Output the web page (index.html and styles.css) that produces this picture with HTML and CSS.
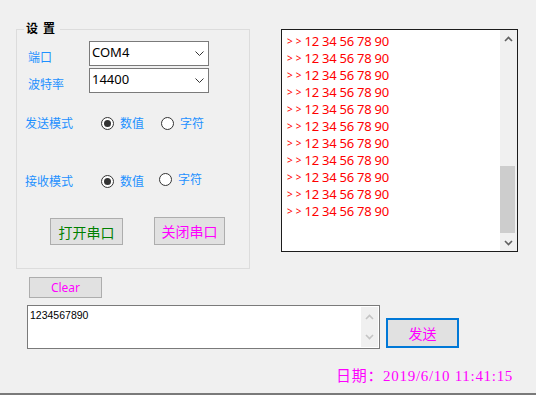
FILE: index.html
```html
<!DOCTYPE html>
<html lang="zh-CN">
<head>
  <meta charset="UTF-8">
  <meta name="viewport" content="width=device-width, initial-scale=1.0">
  <title>串口调试</title>
  <link rel="stylesheet" href="styles.css">
</head>
<body>
  <div class="form">
    <div class="top">
      <div class="group">
        <div class="legend">设置</div>
        <div class="field">
          <span class="lbl">端口</span>
          <div class="combo">COM4<svg class="chev" width="9" height="5" viewBox="0 0 9 5"><path d="M0.5 0.5 L4.5 4.5 L8.5 0.5" fill="none" stroke="#333" stroke-width="1"/></svg></div>
        </div>
        <div class="field second">
          <span class="lbl">波特率</span>
          <div class="combo">14400<svg class="chev" width="9" height="5" viewBox="0 0 9 5"><path d="M0.5 0.5 L4.5 4.5 L8.5 0.5" fill="none" stroke="#333" stroke-width="1"/></svg></div>
        </div>
        <div class="mode send">
          <span class="mlbl">发送模式</span>
          <span class="radio on"></span><span class="rtext first">数值</span>
          <span class="radio"></span><span class="rtext">字符</span>
        </div>
        <div class="mode recv">
          <span class="mlbl">接收模式</span>
          <span class="radio on"></span><span class="rtext first">数值</span>
          <span class="opt-up"><span class="radio"></span><span class="rtext">字符</span></span>
        </div>
        <div class="btns">
          <button class="btn open">打开串口</button>
          <button class="btn close">关闭串口</button>
        </div>
      </div>

      <div class="output">
        <div class="lines">
          <div><span class="pre">&gt;&gt;</span>12 34 56 78 90</div>
          <div><span class="pre">&gt;&gt;</span>12 34 56 78 90</div>
          <div><span class="pre">&gt;&gt;</span>12 34 56 78 90</div>
          <div><span class="pre">&gt;&gt;</span>12 34 56 78 90</div>
          <div><span class="pre">&gt;&gt;</span>12 34 56 78 90</div>
          <div><span class="pre">&gt;&gt;</span>12 34 56 78 90</div>
          <div><span class="pre">&gt;&gt;</span>12 34 56 78 90</div>
          <div><span class="pre">&gt;&gt;</span>12 34 56 78 90</div>
          <div><span class="pre">&gt;&gt;</span>12 34 56 78 90</div>
          <div><span class="pre">&gt;&gt;</span>12 34 56 78 90</div>
          <div><span class="pre">&gt;&gt;</span>12 34 56 78 90</div>
        </div>
        <div class="vscroll">
          <div class="arrow"><svg width="9" height="6" viewBox="0 0 9 6"><path d="M1 5 L4.5 1.5 L8 5" fill="none" stroke="#606060" stroke-width="1.6"/></svg></div>
          <div class="track"><div class="thumb"></div></div>
          <div class="arrow"><svg width="9" height="6" viewBox="0 0 9 6"><path d="M1 1 L4.5 4.5 L8 1" fill="none" stroke="#606060" stroke-width="1.6"/></svg></div>
        </div>
      </div>
    </div>

    <button class="btn clear">Clear</button>

    <div class="send-row">
      <div class="input">
        <div class="input-text">1234567890</div>
        <div class="vscroll small">
          <div class="arrow"><svg width="9" height="6" viewBox="0 0 9 6"><path d="M1 5 L4.5 1.5 L8 5" fill="none" stroke="#c4c4c4" stroke-width="1.6"/></svg></div>
          <div class="track"></div>
          <div class="arrow"><svg width="9" height="6" viewBox="0 0 9 6"><path d="M1 1 L4.5 4.5 L8 1" fill="none" stroke="#c4c4c4" stroke-width="1.6"/></svg></div>
        </div>
      </div>
      <button class="btn send-btn">发送</button>
    </div>

    <div class="date">日期：2019/6/10 11:41:15</div>
  </div>
</body>
</html>
```

FILE: styles.css
```css
* {
  box-sizing: border-box;
}
body {
  margin: 0;
  background: #f0f0f0;
  font-family: "Noto Sans", "Noto Sans CJK SC", sans-serif;
}
.form {
  width: 536px;
  height: 395px;
  border-bottom: 2px solid #7a7a7a;
  overflow: hidden;
}

/* 上半部分 */
.top {
  display: flex;
  align-items: flex-start;
  margin-top: 29px;
  padding-left: 16px;
}
.group {
  width: 234px;
  height: 240px;
  border: 1px solid #dcdcdc;
}
.legend {
  width: fit-content;
  height: 14px;
  margin: -9px 0 -5px 7px;
  padding: 0 0 0 2px;
  background: #f0f0f0;
  font-family: "Noto Sans CJK SC", sans-serif;
  font-size: 12px;
  font-weight: bold;
  line-height: 14px;
  letter-spacing: 5px;
  color: #000;
}
.field {
  display: flex;
  height: 25px;
  margin: 11px 0 0 11px;
}
.field.second {
  margin-top: 2px;
}
.lbl {
  width: 61px;
  padding-top: 8px;
  font-family: "Noto Sans CJK SC", sans-serif;
  font-size: 12px;
  line-height: 16px;
  color: #1e90ff;
}
.combo {
  position: relative;
  width: 120px;
  height: 25px;
  padding-left: 2px;
  border: 1px solid #7a7a7a;
  background: #fff;
  font-size: 13px;
  line-height: 20px;
  color: #000;
}
.chev {
  position: absolute;
  right: 4px;
  top: 9px;
}
.mode {
  display: flex;
  align-items: center;
  height: 16px;
  margin-left: 8px;
  font-family: "Noto Sans CJK SC", sans-serif;
  font-size: 12px;
  line-height: 16px;
  color: #1e90ff;
}
.mode.send {
  margin-top: 22px;
}
.mode.recv {
  margin-top: 42px;
}
.mlbl {
  width: 76px;
}
.radio {
  position: relative;
  width: 13px;
  height: 13px;
  border: 1px solid #333;
  border-radius: 50%;
  background: #fff;
}
.radio.on::after {
  content: "";
  position: absolute;
  left: 2px;
  top: 2px;
  width: 7px;
  height: 7px;
  border-radius: 50%;
  background: #333;
}
.rtext {
  margin-left: 6px;
}
.rtext.first {
  margin-right: 17px;
}
.recv .rtext.first {
  margin-right: 15px;
}
.opt-up {
  display: flex;
  align-items: center;
  margin-top: -4px;
}
.btns {
  display: flex;
  align-items: flex-start;
  margin: 28px 0 0 33px;
}
.btn {
  margin: 0;
  padding: 0;
  border: 1px solid #adadad;
  background: #e1e1e1;
  font-family: "Noto Sans CJK SC", sans-serif;
  font-size: 14px;
}
.btn.open {
  width: 73px;
  height: 27px;
  margin-top: 1px;
  color: #008000;
}
.btn.close {
  width: 71px;
  height: 28px;
  margin-left: 31px;
  color: #ff00ff;
}

/* 接收区 */
.output {
  display: flex;
  width: 237px;
  height: 223px;
  margin-left: 31px;
  border: 1px solid #1c1c1c;
  background: #fff;
}
.lines {
  flex: 1;
  padding: 3px 0 0 5px;
  font-size: 13px;
  line-height: 17px;
  letter-spacing: -0.25px;
  color: #ff0000;
}
.pre {
  font-size: 10px;
  line-height: 0;
  letter-spacing: 3px;
  vertical-align: 1px;
}
.vscroll {
  display: flex;
  flex-direction: column;
  width: 17px;
  background: #f0f0f0;
}
.arrow {
  display: flex;
  align-items: center;
  justify-content: center;
  height: 17px;
}
.track {
  flex: 1;
}
.thumb {
  width: 15px;
  height: 67px;
  margin: 119px 0 0 0;
  background: #cdcdcd;
}

/* 下半部分 */
.btn.clear {
  display: block;
  width: 73px;
  height: 21px;
  margin: 8px 0 0 29px;
  font-family: "Noto Sans", sans-serif;
  font-size: 12px;
  color: #ff00ff;
}
.send-row {
  display: flex;
  align-items: flex-start;
  margin: 7px 0 0 27px;
}
.input {
  display: flex;
  width: 353px;
  height: 44px;
  border: 1px solid #7a7a7a;
  background: #fff;
}
.input-text {
  flex: 1;
  padding: 3px 0 0 2px;
  font-family: "Liberation Sans", sans-serif;
  font-size: 10.5px;
  line-height: 12px;
  color: #000;
}
.vscroll.small {
  margin: 1px 1px 1px 0;
}
.vscroll.small .arrow {
  height: 20px;
}
.btn.send-btn {
  width: 73px;
  height: 30px;
  margin: 13px 0 0 6px;
  border: 2px solid #0078d7;
  color: #ff00ff;
}
.date {
  margin: 18px 0 0 336px;
  font-family: "Liberation Serif", "Noto Sans CJK SC", serif;
  font-size: 15px;
  line-height: 18px;
  letter-spacing: 0.7px;
  color: #ff00ff;
}
```
